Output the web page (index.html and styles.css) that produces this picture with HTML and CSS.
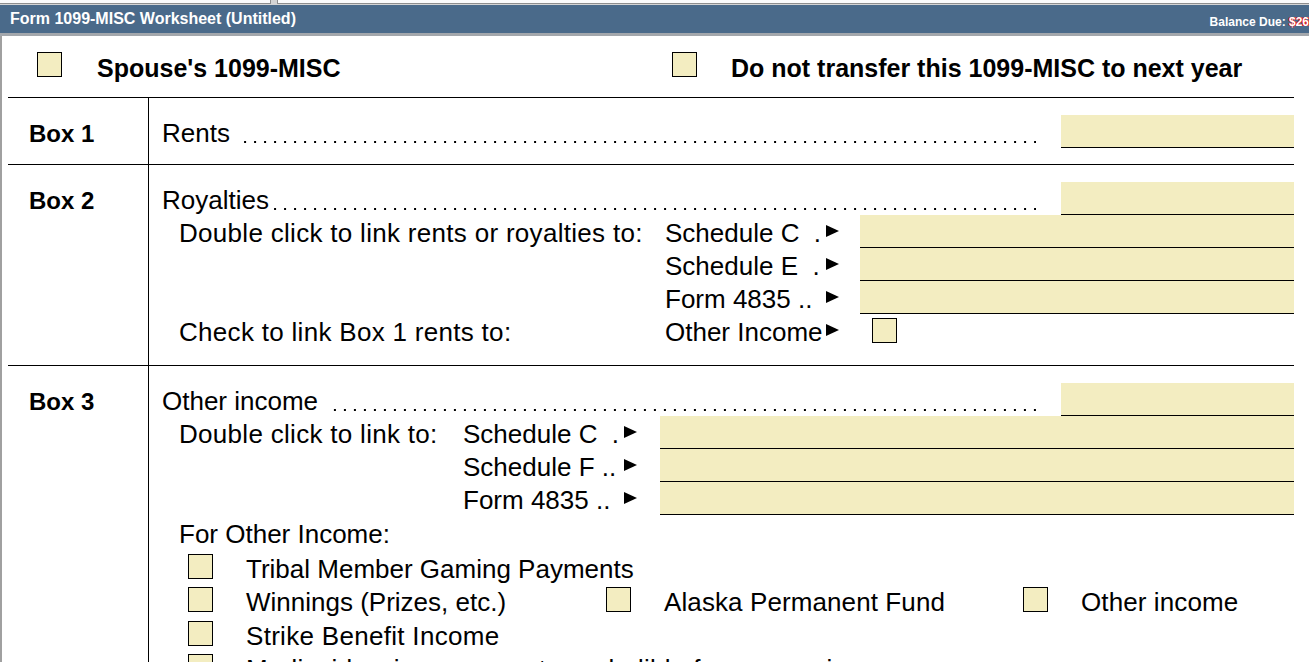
FILE: index.html
```html
<!DOCTYPE html>
<html>
<head>
<meta charset="utf-8">
<title>Form 1099-MISC Worksheet</title>
<link rel="stylesheet" href="styles.css">
</head>
<body>
<div class="topstrip"><div class="tab t1"></div><div class="tab t2"></div></div>
<div class="titlebar">
  <span class="title">Form 1099-MISC Worksheet (Untitled)</span>
  <span class="balance">Balance Due: <span class="amt">$26</span></span>
</div>
<div class="sheet">
  <div class="form">
    <div class="head">
      <div class="hcell first"><span class="cb"></span><span class="htext">Spouse's 1099-MISC</span></div>
      <div class="hcell second"><span class="cb"></span><span class="htext">Do not transfer this 1099-MISC to next year</span></div>
    </div>

    <div class="row r1">
      <div class="boxlabel">Box 1</div>
      <div class="body">
        <div class="line"><span class="t">Rents</span><span class="dots gap"></span><span class="field short"></span></div>
      </div>
    </div>

    <div class="row r2">
      <div class="boxlabel">Box 2</div>
      <div class="body">
        <div class="line"><span class="t">Royalties</span><span class="dots"></span><span class="field short"></span></div>
        <div class="sub s2">
          <span class="t uni">Double click to link rents or royalties to:</span>
          <span class="t">Schedule C&nbsp;&nbsp;.</span>
          <svg class="arrow" width="13" height="12" viewBox="0 0 13 12"><polygon points="0,0 13,6 0,12" fill="#000"/></svg>
          <span class="field"></span>
        </div>
        <div class="sub s2">
          <span></span>
          <span class="t">Schedule E&nbsp;&nbsp;.</span>
          <svg class="arrow" width="13" height="12" viewBox="0 0 13 12"><polygon points="0,0 13,6 0,12" fill="#000"/></svg>
          <span class="field"></span>
        </div>
        <div class="sub s2">
          <span></span>
          <span class="t">Form 4835 ..</span>
          <svg class="arrow" width="13" height="12" viewBox="0 0 13 12"><polygon points="0,0 13,6 0,12" fill="#000"/></svg>
          <span class="field"></span>
        </div>
        <div class="sub s2">
          <span class="t uni">Check to link Box 1 rents to:</span>
          <span class="t">Other Income</span>
          <svg class="arrow" width="13" height="12" viewBox="0 0 13 12"><polygon points="0,0 13,6 0,12" fill="#000"/></svg>
          <span class="cbcell"><span class="cb"></span></span>
        </div>
      </div>
    </div>

    <div class="row r3">
      <div class="boxlabel">Box 3</div>
      <div class="body">
        <div class="line"><span class="t">Other income</span><span class="dots gap"></span><span class="field short"></span></div>
        <div class="sub s3">
          <span class="t uni">Double click to link to:</span>
          <span class="t">Schedule C&nbsp;&nbsp;.</span>
          <svg class="arrow" width="13" height="12" viewBox="0 0 13 12"><polygon points="0,0 13,6 0,12" fill="#000"/></svg>
          <span class="field"></span>
        </div>
        <div class="sub s3">
          <span></span>
          <span class="t">Schedule F ..</span>
          <svg class="arrow" width="13" height="12" viewBox="0 0 13 12"><polygon points="0,0 13,6 0,12" fill="#000"/></svg>
          <span class="field"></span>
        </div>
        <div class="sub s3">
          <span></span>
          <span class="t">Form 4835 ..</span>
          <svg class="arrow" width="13" height="12" viewBox="0 0 13 12"><polygon points="0,0 13,6 0,12" fill="#000"/></svg>
          <span class="field"></span>
        </div>
        <div class="forother"><span class="t">For Other Income:</span></div>
        <div class="opts">
          <div class="opt"><span class="cb"></span><span class="t">Tribal Member Gaming Payments</span></div>
          <div class="opt"></div>
          <div class="opt"></div>
          <div class="opt"><span class="cb"></span><span class="t">Winnings (Prizes, etc.)</span></div>
          <div class="opt"><span class="cb"></span><span class="t uni2">Alaska Permanent Fund</span></div>
          <div class="opt"><span class="cb"></span><span class="t uni2">Other income</span></div>
          <div class="opt"><span class="cb"></span><span class="t uni">Strike Benefit Income</span></div>
          <div class="opt"></div>
          <div class="opt"></div>
          <div class="opt wide"><span class="cb"></span><span class="t uni">Medicaid waiver payments excludible from gross income</span></div>
        </div>
      </div>
    </div>
  </div>
</div>
</body>
</html>
```

FILE: styles.css
```css
html, body {
  margin: 0;
  padding: 0;
  overflow: hidden;
  background: #fff;
}
body {
  width: 1309px;
  height: 662px;
  font-family: "Liberation Sans", Arial, sans-serif;
  color: #000;
}
.topstrip {
  height: 5px;
  background: #d4d4d4;
  display: flex;
}
.tab {
  height: 3px;
  background: #fbfbfb;
  border-bottom: 1px solid #8e8e8e;
}
.tab.t1 {
  width: 270px;
  border-right: 1px solid #8e8e8e;
}
.tab.t2 {
  flex: 1;
  margin-left: 6px;
  border-left: 1px solid #8e8e8e;
}
.titlebar {
  height: 28px;
  background: #4a6a8a;
  border-bottom: 3px solid #a3a7ac;
  display: flex;
  justify-content: space-between;
  align-items: center;
  color: #fff;
}
.title {
  font-weight: bold;
  font-size: 16px;
  padding-left: 10px;
}
.balance {
  align-self: flex-end;
  padding-bottom: 4px;
  font-weight: bold;
  font-size: 12px;
  white-space: nowrap;
}
.amt {
  text-shadow: -1px 0 0 #e01010, 1px 0 0 #e01010;
}
.sheet {
  border-left: 2px solid #a0a0a0;
  height: 626px;
}
.form {
  margin-left: 6px;
  width: 1286px;
}
.head {
  height: 61px;
  box-sizing: border-box;
  padding-top: 16px;
  display: grid;
  grid-template-columns: 664px 1fr;
}
.hcell {
  display: flex;
  align-items: baseline;
  gap: 35px;
}
.hcell.first {
  padding-left: 29px;
}
.hcell.second {
  gap: 34px;
}
.htext {
  font-weight: bold;
  font-size: 25px;
  line-height: 25px;
  white-space: nowrap;
}
.cb {
  display: inline-block;
  flex: none;
  width: 25px;
  height: 25px;
  box-sizing: border-box;
  border: 1px solid #000;
  background: #f3edc1;
}
.row {
  display: grid;
  grid-template-columns: 140px 1fr;
  border-top: 1px solid #000;
}
.boxlabel {
  font-weight: bold;
  font-size: 24px;
  line-height: 32px;
  padding: 20px 0 0 21px;
}
.body {
  border-left: 1px solid #000;
  padding: 17px 0 16px 13px;
}
.r2 .body {
  padding-bottom: 18px;
}
.line {
  height: 33px;
  display: flex;
  align-items: flex-start;
}
.t {
  font-size: 26px;
  line-height: 32px;
  padding-top: 2px;
  white-space: nowrap;
}
.uni {
  letter-spacing: 0.3px;
}
.uni2 {
  letter-spacing: 0.1px;
}
.dots {
  flex: 1;
  height: 33px;
  margin: 0 25px 0 5px;
  background-image: linear-gradient(to right, transparent 8px, #000 8px);
  background-size: 10px 2px;
  background-repeat: repeat-x;
  background-position: right 0 top 26px;
}
.dots.gap {
  margin-left: 12px;
}
.field {
  display: block;
  height: 33px;
  box-sizing: border-box;
  background: #f3edc1;
  border-bottom: 1px solid #000;
}
.field.short {
  width: 233px;
  flex: none;
}
.sub {
  display: grid;
  height: 33px;
  padding-left: 17px;
  align-items: start;
}
.s2 {
  grid-template-columns: 486px 161px 34px 1fr;
}
.s3 {
  grid-template-columns: 284px 161px 36px 1fr;
}
.arrow {
  display: block;
  margin-top: 10px;
}
.cbcell {
  display: block;
  padding: 4px 0 0 12px;
}
.forother {
  height: 33px;
  margin-top: 3px;
  padding-left: 17px;
}
.opts {
  display: grid;
  grid-template-columns: 418px 417px 1fr;
  grid-auto-rows: 33.4px;
  padding-left: 26px;
}
.opt {
  display: flex;
  align-items: flex-start;
  gap: 33px;
}
.opt .cb {
  margin-top: 3px;
}
.opt.wide {
  grid-column: 1 / -1;
}
```
